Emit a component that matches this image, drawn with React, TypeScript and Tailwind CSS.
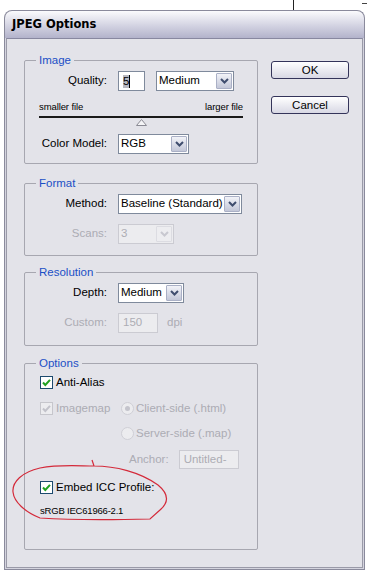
import React from "react";

const Chevron = ({ disabled }: { disabled?: boolean }) => (
  <svg width="9" height="6" viewBox="0 0 9 6">
    <polyline points="1,1 4.5,4.5 8,1" fill="none" stroke={disabled ? "#c8c8d0" : "#3f4d6e"} strokeWidth="2" />
  </svg>
);

function Select({ value, className, disabled }: { value: string; className: string; disabled?: boolean }) {
  return (
    <div
      className={
        "h-[20px] flex items-stretch border " +
        (disabled ? "border-[#cbcbd2] bg-[#ececef] text-[#acacb4] " : "border-[#7f8a9c] bg-white text-black ") +
        className
      }
    >
      <div className="flex-1 flex items-center pl-[2px] whitespace-nowrap overflow-hidden">{value}</div>
      <div
        className={
          "w-[16px] m-[1px] flex items-center justify-center rounded-[1px] border " +
          (disabled
            ? "border-[#dcdce2] bg-[#ededf0]"
            : "border-[#aab0c6] bg-linear-to-b from-[#f2f3f8] to-[#c3c7d8]")
        }
      >
        <Chevron disabled={disabled} />
      </div>
    </div>
  );
}

function Check({ disabled }: { disabled?: boolean }) {
  return (
    <div
      className={
        "w-[13px] h-[13px] border flex items-center justify-center " +
        (disabled ? "border-[#c6c6cc] bg-[#ececef]" : "border-[#1c4a6e] bg-white")
      }
    >
      <svg width="11" height="11" viewBox="0 0 11 11">
        <polyline
          points="2,5.5 4.3,8 9,2.8"
          fill="none"
          stroke={disabled ? "#c2c2ca" : "#21a121"}
          strokeWidth="2"
        />
      </svg>
    </div>
  );
}

function Radio({ dot }: { dot?: boolean }) {
  return (
    <div className="w-[13px] h-[13px] rounded-full border border-[#cfcfd6] bg-[#ececef] flex items-center justify-center">
      {dot ? <div className="w-[5px] h-[5px] rounded-full bg-[#c4c4cc]" /> : null}
    </div>
  );
}

function Group({ label, className, children }: { label: string; className: string; children: React.ReactNode }) {
  return (
    <div className={"relative border border-[#a7a7b0] rounded-[2px] w-[234px] " + className}>
      <span className="absolute left-[11px] top-[-8px] px-[3px] bg-[#e3e3e9] text-[#1b4fc6] leading-[14px]">
        {label}
      </span>
      {children}
    </div>
  );
}

export default function App() {
  return (
    <div className="relative w-[371px] h-[576px] bg-white overflow-hidden font-['Liberation_Sans',Arial,sans-serif] text-[11.5px] text-black">
      <div className="flex h-[10px]">
        <div className="ml-[293px] w-[1px] h-[10px] bg-[#222]" />
        <div className="ml-[68px] mt-[3px] w-[5px] h-[1px] bg-[#444]" />
      </div>
      <div className="ml-[4px] w-[361px] h-[560px] flex flex-col">
        <div className="h-[28px] rounded-t-[8px] border border-[#8a8a9c] border-b-0 bg-linear-to-b from-[#fbfbfd] via-[#d6d6e4] to-[#b3b3cb] flex items-center pl-[7px]">
          <span className="font-['DejaVu_Sans',sans-serif] font-bold text-[11.5px] text-black">JPEG Options</span>
        </div>
        <div className="flex-1 border border-t-0 border-[#8a8a9c] bg-[#d4d4de] px-[1px] pb-[1px]">
          <div className="h-full border border-[#9a9aa8] border-t-[#8888a0] bg-[#e3e3e9] flex pl-[17px] pt-[21px]">
            <div className="flex flex-col w-[234px]">
              {/* Image */}
              <Group label="Image" className="h-[104px]">
                <div className="flex items-center h-[20px] mt-[10px]">
                  <div className="w-[82px] text-right">Quality:</div>
                  <div className="ml-[11px] w-[27px] h-[20px] border border-[#7f8a9c] bg-white flex items-center pl-[4px]">
                    <span className="bg-[#b8b8c0] leading-[13px]">5</span>
                    <span className="w-[1px] h-[13px] bg-black" />
                  </div>
                  <Select value="Medium" className="ml-[11px] w-[78px]" />
                </div>
                <div className="mt-[10px] mx-[14px] h-[12px] flex justify-between items-center text-[9.5px] tracking-[-0.1px] leading-[12px]">
                  <span>smaller file</span>
                  <span>larger file</span>
                </div>
                <div className="mt-[3px] mx-[14px] h-[2px] bg-[#1a1a1a]" />
                <div className="ml-[111px] mt-[1px] h-[7px]">
                  <svg width="11" height="7" viewBox="0 0 11 7">
                    <polygon points="5.5,0.5 10.5,6.5 0.5,6.5" fill="#f4f4f6" stroke="#8a8a94" strokeWidth="1" />
                  </svg>
                </div>
                <div className="flex items-center h-[20px] mt-[8px]">
                  <div className="w-[82px] text-right">Color Model:</div>
                  <Select value="RGB" className="ml-[11px] w-[71px]" />
                </div>
              </Group>

              {/* Format */}
              <Group label="Format" className="h-[73px] mt-[19px]">
                <div className="flex items-center h-[20px] mt-[10px]">
                  <div className="w-[82px] text-right">Method:</div>
                  <Select value="Baseline (Standard)" className="ml-[11px] w-[124px]" />
                </div>
                <div className="flex items-center h-[20px] mt-[10px]">
                  <div className="w-[82px] text-right text-[#acacb4]">Scans:</div>
                  <Select value="3" className="ml-[11px] w-[56px]" disabled />
                </div>
              </Group>

              {/* Resolution */}
              <Group label="Resolution" className="h-[74px] mt-[16px]">
                <div className="flex items-center h-[20px] mt-[10px]">
                  <div className="w-[82px] text-right">Depth:</div>
                  <Select value="Medium" className="ml-[11px] w-[66px]" />
                </div>
                <div className="flex items-center h-[20px] mt-[10px] text-[#acacb4]">
                  <div className="w-[82px] text-right">Custom:</div>
                  <div className="ml-[11px] w-[40px] h-[20px] border border-[#cbcbd2] bg-[#ececef] flex items-center pl-[4px]">
                    150
                  </div>
                  <span className="ml-[9px]">dpi</span>
                </div>
              </Group>

              {/* Options */}
              <Group label="Options" className="h-[187px] mt-[17px]">
                <div className="pl-[15px] pt-[12px] flex flex-col">
                  <div className="flex items-center h-[13px] gap-[3px]">
                    <Check />
                    <span>Anti-Alias</span>
                  </div>
                  <div className="flex items-center h-[13px] mt-[13px] text-[#acacb4]">
                    <div className="w-[81px] flex items-center gap-[3px]">
                      <Check disabled />
                      <span>Imagemap</span>
                    </div>
                    <Radio dot />
                    <span className="ml-[2px]">Client-side (.html)</span>
                  </div>
                  <div className="flex items-center h-[13px] mt-[12px] text-[#acacb4]">
                    <div className="w-[81px]" />
                    <Radio />
                    <span className="ml-[2px]">Server-side (.map)</span>
                  </div>
                  <div className="flex items-center h-[19px] mt-[10px] text-[#acacb4]">
                    <div className="w-[89px]" />
                    <span>Anchor:</span>
                    <div className="ml-[10px] w-[60px] h-[19px] border border-[#cbcbd2] bg-[#ececef] flex items-center pl-[4px] overflow-hidden whitespace-nowrap">
                      Untitled-
                    </div>
                  </div>
                  <div className="flex items-center h-[13px] mt-[12px] gap-[3px]">
                    <Check />
                    <span>Embed ICC Profile:</span>
                  </div>
                  <div className="mt-[11px] h-[12px] leading-[12px] text-[9.5px] tracking-[-0.2px]">sRGB IEC61966-2.1</div>
                </div>
              </Group>
            </div>

            <div className="ml-[13px] flex flex-col pt-[1px]">
              <button className="w-[78px] h-[18px] rounded-[3px] border border-[#34345a] bg-linear-to-b from-white to-[#d8d8e4] text-[11.5px] leading-[16px] text-black">
                OK
              </button>
              <button className="mt-[17px] w-[78px] h-[18px] rounded-[3px] border border-[#34345a] bg-linear-to-b from-white to-[#d8d8e4] text-[11.5px] leading-[16px] text-black">
                Cancel
              </button>
            </div>
          </div>
        </div>
      </div>

      <svg className="absolute left-0 top-0 pointer-events-none" width="371" height="576" viewBox="0 0 371 576">
        <path
          d="M92 460 L94 466 C115 466 140 472 158 485 C170 495 168 503 160 510 L150 519 C110 520 70 520 40 518 C25 512 14 502 13 492 C12 482 22 472 40 468 C60 464 80 466 94 466"
          fill="none"
          stroke="#d42a3a"
          strokeWidth="1.2"
        />
      </svg>
    </div>
  );
}
